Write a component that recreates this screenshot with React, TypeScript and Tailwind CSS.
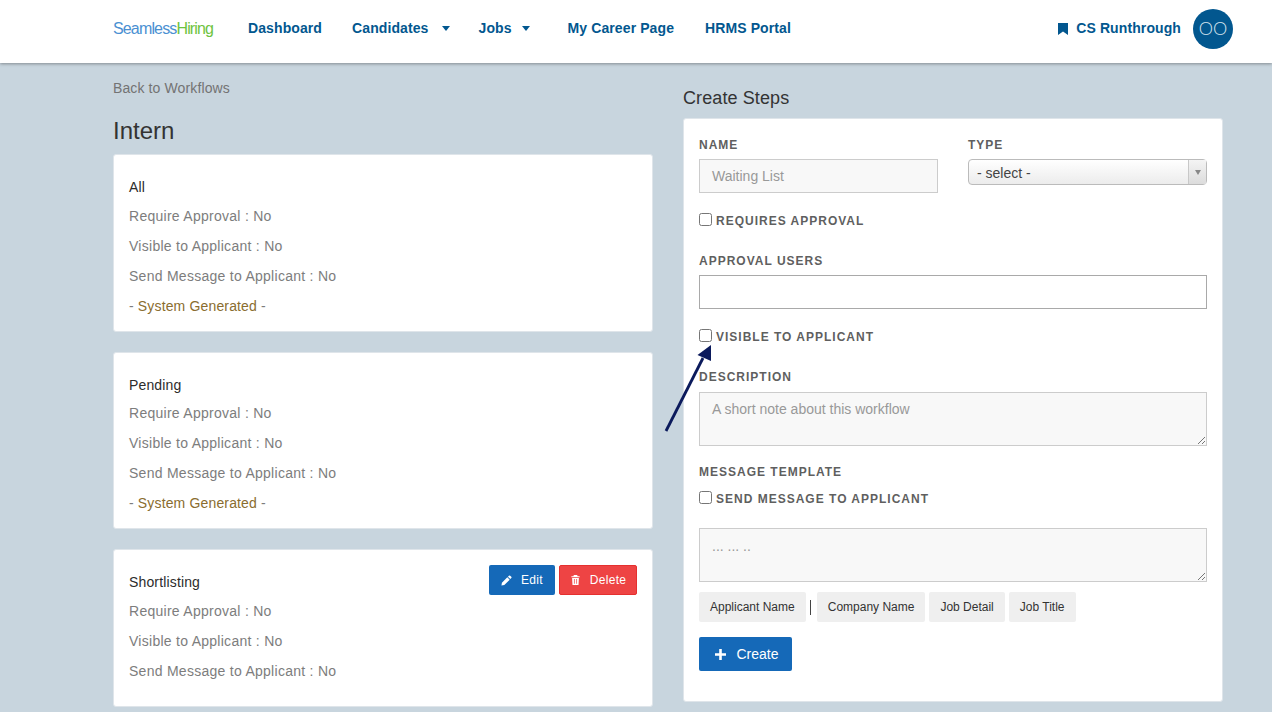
import React from "react";

const FONT = "[font-family:'Liberation_Sans',Arial,sans-serif]";

function Caret({ className = "" }: { className?: string }) {
  return <span className={`inline-block h-0 w-0 border-x-[4px] border-t-[5px] border-x-transparent border-t-[#02578f] ${className}`} />;
}

function Label({ children, className = "" }: { children: React.ReactNode; className?: string }) {
  return <div className={`text-[12px] leading-[16px] font-bold tracking-[1px] text-[#5f5f5f] ${className}`}>{children}</div>;
}

function Check({ label, className = "" }: { label: string; className?: string }) {
  return (
    <div className={`flex items-start ${className}`}>
      <span className="h-[13px] w-[13px] rounded-[2.5px] border border-[#767676] bg-white" />
      <span className="ml-[4px] text-[12px] leading-[16px] font-bold tracking-[1px] text-[#5f5f5f]">{label}</span>
    </div>
  );
}

function Row({ children, className = "tracking-[0.27px]" }: { children: React.ReactNode; className?: string }) {
  return <div className={`text-[14px] leading-[30px] text-[#7d7d7d] ${className}`}>{children}</div>;
}

function WorkflowCard({ title, system, actions, rowsGap, className = "" }: { title: string; system?: boolean; actions?: boolean; rowsGap: string; className?: string }) {
  return (
    <div className={`relative rounded-[3px] border border-[#dfe5ea] bg-white px-[15px] pt-[22px] ${className}`}>
      {actions && (
        <div className="absolute top-[15px] right-[15px] flex gap-[4px]">
          <button className="flex h-[30px] w-[66px] items-center justify-center gap-[9px] rounded-[2px] bg-[#1569b8] text-[12px] tracking-[0.3px] text-white">
            <svg width="11" height="11" viewBox="0 0 12 12" fill="white"><path d="M8.600.8a1 1 0 0 1 1.400 0l1.200 1.200a1 1 0 0 1 0 1.400l-1 1L7.600 1.800zM6.900 2.500l2.600 2.600L3.600 11 .5 11.500 1 8.400z" /></svg>
            Edit
          </button>
          <button className="flex h-[30px] w-[78px] items-center justify-center gap-[9px] rounded-[2px] border border-[#e5302f] bg-[#ee4444] text-[12px] tracking-[0.3px] text-white">
            <svg width="11" height="12" viewBox="0 0 12 12" fill="white"><path d="M4.200.6h3.600l.5 1.200h2.200v1.300H1.500V1.800h2.200zM2.300 3.800h7.400l-.4 7.600H2.700zM4.300 5v5h.8V5zm2.600 0v5h.8V5z" /></svg>
            Delete
          </button>
        </div>
      )}
      <div className="text-[14px] leading-[20px] tracking-[0.15px] text-[#2c2c2c]">{title}</div>
      <Row className={`${rowsGap} tracking-[0.27px]`}>Require Approval : No</Row>
      <Row>Visible to Applicant : No</Row>
      <Row>Send Message to Applicant : No</Row>
      {system && (
        <Row className="tracking-[0.15px]">
          - <span className="text-[#8a6d2f]">System Generated</span> -
        </Row>
      )}
    </div>
  );
}

function Chip({ children }: { children: React.ReactNode }) {
  return <span className="flex h-[30px] items-center rounded-[2px] bg-[#efefef] px-[11px] text-[12px] text-[#333]">{children}</span>;
}

export default function App() {
  return (
    <div className={`relative h-[712px] w-[1272px] overflow-hidden bg-[#c8d5de] ${FONT}`}>
      <header className="flex h-[63px] items-center bg-white pr-[39px] pb-[6px] pl-[113px] shadow-[0_1px_3px_rgba(0,0,0,0.35)]">
        <div className="w-[135px] text-[16px] tracking-[-0.85px] text-[#4a90d2]">
          Seamless<span className="text-[#6ec33f]">Hiring</span>
        </div>
        <nav className="flex items-center text-[14px] font-bold tracking-[0.1px] text-[#02578f]">
          <a>Dashboard</a>
          <a className="ml-[30px] flex items-center">Candidates<Caret className="ml-[13px]" /></a>
          <a className="ml-[29px] flex items-center">Jobs<Caret className="ml-[10px]" /></a>
          <a className="ml-[38px]">My Career Page</a>
          <a className="ml-[31px]">HRMS Portal</a>
        </nav>
        <div className="ml-auto flex items-center text-[14px] font-bold tracking-[0.1px] text-[#02578f]">
          <svg width="10" height="12" viewBox="0 0 10 12" fill="#02578f"><path d="M0 0h10v12L5 8.500 0 12z" /></svg>
          <span className="ml-[8px]">CS Runthrough</span>
          <span className="ml-[12px] flex h-[40px] w-[40px] items-center justify-center rounded-full bg-[#02578f] text-[18px] font-light tracking-normal text-[#d5e4ee] [font-family:Lato,sans-serif]">OO</span>
        </div>
      </header>

      <main className="flex gap-[30px] pl-[113px]">
        <section className="w-[540px]">
          <div className="mt-[16px] text-[14px] leading-[18px] tracking-[0.12px] text-[#737373]">Back to Workflows</div>
          <h1 className="mt-[19px] text-[24px] leading-[30px] text-[#333]">Intern</h1>
          <WorkflowCard className="mt-[8px] h-[178px]" rowsGap="mt-[4px]" title="All" system />
          <WorkflowCard className="mt-[20px] h-[177px]" rowsGap="mt-[3px]" title="Pending" system />
          <WorkflowCard className="mt-[20px] h-[158px]" rowsGap="mt-[4px]" title="Shortlisting" actions />
        </section>

        <section className="w-[540px]">
          <h2 className="mt-[24px] text-[18px] leading-[22px] tracking-[0.1px] text-[#333]">Create Steps</h2>
          <div className="mt-[9px] h-[584px] rounded-[3px] border border-[#dfe5ea] bg-white px-[15px] pt-[18px]">
            <div className="flex gap-[30px]">
              <div className="w-[239px]">
                <Label>NAME</Label>
                <div className="mt-[6px] flex h-[34px] items-center border border-[#cccccc] bg-[#f8f8f8] px-[12px] text-[14px] text-[#999]">Waiting List</div>
              </div>
              <div className="w-[239px]">
                <Label>TYPE</Label>
                <div className="mt-[6px] flex h-[26px] items-center justify-between rounded-[4px] border border-[#bbb] bg-gradient-to-b from-white to-[#ececec] pl-[8px] text-[14px] text-[#444]">
                  <span className="pt-[2px]">- select -</span>
                  <span className="flex h-full w-[18px] items-center justify-center border-l border-[#c8c8c8] bg-gradient-to-b from-[#f4f4f4] to-[#dcdcdc]">
                    <span className="h-0 w-0 border-x-[3.5px] border-t-[5px] border-x-transparent border-t-[#888]" />
                  </span>
                </div>
              </div>
            </div>
            <Check className="mt-[20px]" label="REQUIRES APPROVAL" />
            <Label className="mt-[24px]">APPROVAL USERS</Label>
            <div className="mt-[6px] h-[34px] border border-[#a9a9a9] bg-white" />
            <Check className="mt-[20px]" label="VISIBLE TO APPLICANT" />
            <Label className="mt-[24px]">DESCRIPTION</Label>
            <div className="relative mt-[7px] h-[54px] border border-[#cccccc] bg-[#f8f8f8] px-[12px] pt-[7px] text-[14px] leading-[18px] text-[#999]">
              A short note about this workflow
              <svg className="absolute right-[1px] bottom-[1px]" width="8" height="8" viewBox="0 0 8 8" stroke="#777"><path d="M1 8l7-7M5 8l3-3" /></svg>
            </div>
            <Label className="mt-[18px]">MESSAGE TEMPLATE</Label>
            <Check className="mt-[11px]" label="SEND MESSAGE TO APPLICANT" />
            <div className="relative mt-[21px] h-[54px] border border-[#cccccc] bg-[#f8f8f8] px-[12px] pt-[8px] text-[14px] leading-[18px] text-[#999]">
              ... ... ..
              <svg className="absolute right-[1px] bottom-[1px]" width="8" height="8" viewBox="0 0 8 8" stroke="#777"><path d="M1 8l7-7M5 8l3-3" /></svg>
            </div>
            <div className="mt-[10px] flex items-center gap-[4px]">
              <Chip>Applicant Name</Chip>
              <span className="mr-[2px] h-[15px] w-px bg-[#444]" />
              <Chip>Company Name</Chip>
              <Chip>Job Detail</Chip>
              <Chip>Job Title</Chip>
            </div>
            <button className="mt-[15px] flex h-[34px] w-[93px] items-center justify-center gap-[10px] rounded-[2px] bg-[#1569b8] pl-[3px] text-[14px] text-white">
              <svg width="11" height="11" viewBox="0 0 11 11" fill="white"><path d="M4.200 0h2.600v4.200H11v2.600H6.800V11H4.200V6.800H0V4.200h4.200z" /></svg>
              Create
            </button>
          </div>
        </section>
      </main>

      <svg className="pointer-events-none absolute top-[340px] left-[660px]" width="60" height="95" viewBox="660 340 60 95">
        <path d="M666 431L703 358" stroke="#0b1a5c" strokeWidth="2.800" fill="none" />
        <path d="M711 345L697.500 355L711 361z" fill="#0b1a5c" />
      </svg>
    </div>
  );
}
